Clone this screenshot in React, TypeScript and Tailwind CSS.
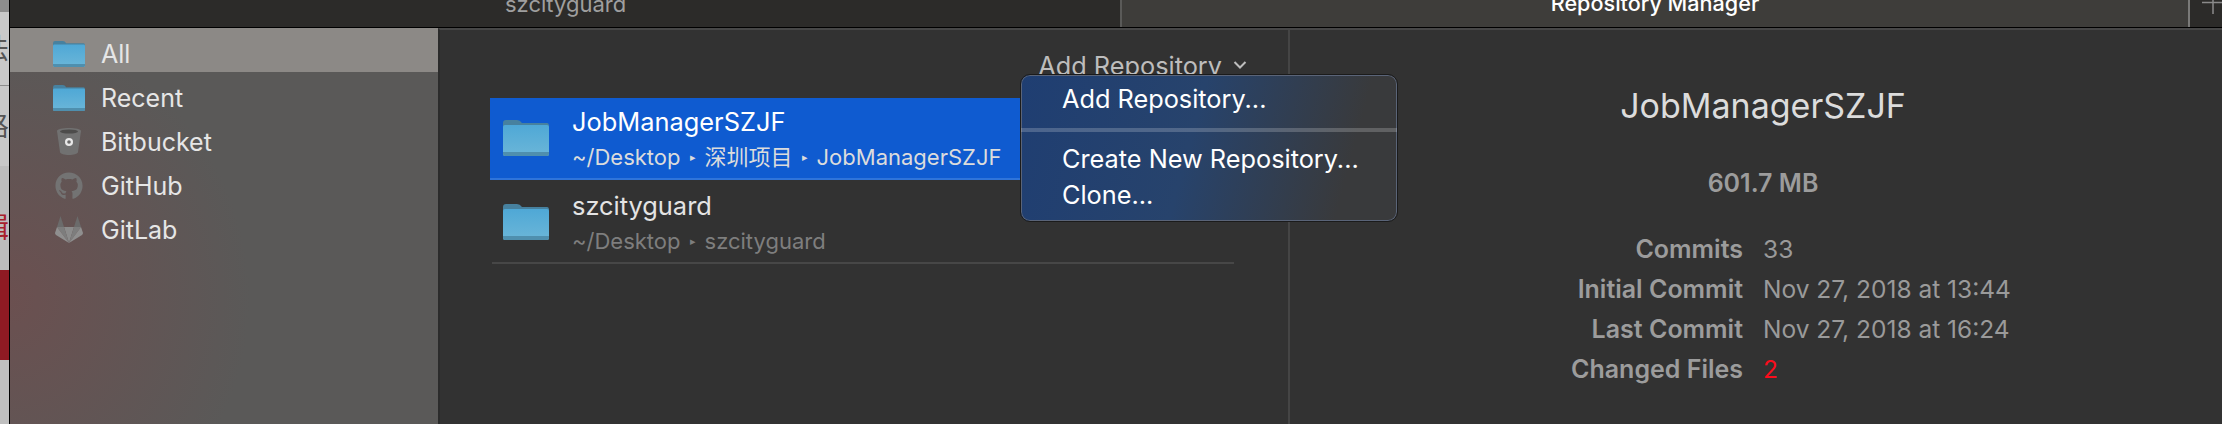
import { FaGithub } from "react-icons/fa";

const font = { fontFamily: "Inter, 'Noto Sans CJK SC', sans-serif" };

function Folder({ className }: { className: string }) {
  return (
    <svg className={className} viewBox="0 0 46 36" preserveAspectRatio="none">
      <defs>
        <linearGradient id="folderBody" x1="0" y1="0" x2="0" y2="1">
          <stop offset="0" stopColor="#4fa8d6" />
          <stop offset="1" stopColor="#6bb6d8" />
        </linearGradient>
      </defs>
      <path d="M0 3 Q0 0 3 0 H14 Q17 0 19 3 H44 Q46 3 46 6 V10 H0 Z" fill="#47819f" />
      <rect x="0" y="5" width="46" height="31" rx="2" fill="url(#folderBody)" />
      <path d="M0 32 H46 V34 Q46 36 44 36 H2 Q0 36 0 34 Z" fill="#4f8fae" />
    </svg>
  );
}

function Bitbucket() {
  return (
    <svg className="w-[24px] h-[28px]" viewBox="0 0 24 28">
      <path d="M0 3 C0 -1 24 -1 24 3 L21 24 C20.500 28 3.500 28 3 24 Z" fill="#717171" />
      <ellipse cx="12" cy="3.500" rx="9" ry="2" fill="#4d4c4b" />
      <circle cx="12" cy="14" r="4" fill="#e8e8e8" />
      <circle cx="12" cy="14" r="1.800" fill="#6a6a6a" />
    </svg>
  );
}

function GitLab() {
  return (
    <svg className="w-[28px] h-[28px]" viewBox="0 0 28 28">
      <path d="M14 27 L9 11 H19 Z" fill="#8c8c8c" />
      <path d="M14 27 L9 11 H2 Z" fill="#7d7d7d" />
      <path d="M14 27 L19 11 H26 Z" fill="#7d7d7d" />
      <path d="M2 11 L0 17 Q0 18 1 19 L14 27 Z" fill="#8f8f8f" />
      <path d="M26 11 L28 17 Q28 18 27 19 L14 27 Z" fill="#8f8f8f" />
      <path d="M2 11 L5.500 0 L9 11 Z" fill="#6b6b6b" />
      <path d="M26 11 L22.500 0 L19 11 Z" fill="#6b6b6b" />
    </svg>
  );
}

function SideItem({ label, icon, active }: { label: string; icon: React.ReactNode; active?: boolean }) {
  return (
    <div className={`h-[44px] pt-[7px] flex items-center ${active ? "bg-[#8c8986]" : ""}`}>
      <div className="w-[82px] flex justify-end">
        <div className="w-[46px] flex justify-center">{icon}</div>
      </div>
      <span className="ml-[9px] mt-[2px] text-[25px] text-[#e6e6e6] leading-none">{label}</span>
    </div>
  );
}

function DesktopBit({ className, text, color }: { className: string; text?: string; color?: string }) {
  return (
    <div className={`flex items-center justify-end overflow-hidden ${className}`}>
      {text ? <span className={`text-[28px] leading-none whitespace-nowrap ${color}`}>{text}</span> : null}
    </div>
  );
}

function Row({ name, path, selected }: { name: string; path: React.ReactNode; selected?: boolean }) {
  return (
    <div className={`flex items-center ${selected ? "h-[82px] bg-[#0f5bd0] border-b-2 border-[#2f74da]" : "h-[84px] pt-[2px] border-b-2 border-[#474747] ml-[2px]"}`}>
      <Folder className={`w-[46px] h-[36px] shrink-0 ${selected ? "ml-[13px]" : "ml-[11px]"}`} />
      <div className="ml-[23px] flex flex-col pt-[2px]">
        <span className={`text-[25.400px] leading-[36px] ${selected ? "text-white" : "text-[#e4e4e4]"}`}>{name}</span>
        <span className={`text-[22px] leading-[34px] flex items-center ${selected ? "text-[#dcdcdc]" : "text-[#7e7e7e]"}`}>{path}</span>
      </div>
    </div>
  );
}

const Arrow = () => <span className="text-[11px] mx-[9px] leading-none">▸</span>;

function Stat({ label, value, red }: { label: string; value: string; red?: boolean }) {
  return (
    <>
      <div className="text-right font-semibold text-[#9c9c9c] text-[25px] leading-[40px]">{label}</div>
      <div className={`text-[24.500px] leading-[40px] ${red ? "text-[#fb0d1c]" : "text-[#9a9a9a]"}`}>{value}</div>
    </>
  );
}

export default function App() {
  return (
    <div style={font} className="w-[2222px] h-[424px] flex overflow-hidden bg-[#323232]">
      <div className="w-[9px] h-full flex flex-col shrink-0 bg-[#c6c6c6]">
        <DesktopBit className="h-[12px] bg-[#8d8d8d]" />
        <DesktopBit className="h-[73px] bg-[#c9c9c9]" text="法" color="text-[#555555]" />
        <DesktopBit className="h-[81px] bg-[#c8c8c8] border-t border-[#8c8c8c]" text="路" color="text-[#555555]" />
        <DesktopBit className="h-[104px] pt-[20px] bg-[#bdbdbd]" text="辑" color="text-[#a8202c]" />
        <div className="h-[90px] bg-[#8f1a23]" />
        <div className="flex-1 bg-[#bfbfbf]" />
      </div>
      <div className="w-px h-full bg-black shrink-0" />
      <div className="flex-1 flex flex-col min-w-0">
        <div className="h-[27px] flex overflow-hidden shrink-0">
          <div className="w-[1110px] shrink-0 bg-[#2c2b29] text-[22px] leading-none text-[#9f9f9f] pl-[495px]">
            <div className="-mt-[7px]">szcityguard</div>
          </div>
          <div className="w-[2px] shrink-0 bg-[#5a5a58]" />
          <div className="w-[1066px] shrink-0 bg-[#3e3d3a] text-[21.600px] leading-none text-white flex justify-center font-medium">
            <div className="-mt-[7px]">Repository Manager</div>
          </div>
          <div className="w-[2px] shrink-0 bg-[#7a7a78]" />
          <div className="flex-1 bg-[#2c2b29]">
            <svg className="w-[20px] h-[14px] ml-[12px]" viewBox="0 0 20 14">
              <path d="M0 2.500 H20 M11 0 V14" stroke="#8a8a8a" strokeWidth="1.500" fill="none" />
            </svg>
          </div>
        </div>
        <div className="h-px bg-black shrink-0" />
        <div className="flex-1 flex min-h-0">
          <div className="w-[428px] shrink-0 bg-[radial-gradient(ellipse_240px_260px_at_0px_270px,#6b5050,#5a5958)]">
            <SideItem active label="All" icon={<Folder className="w-[32px] h-[26px]" />} />
            <SideItem label="Recent" icon={<Folder className="w-[32px] h-[26px]" />} />
            <SideItem label="Bitbucket" icon={<Bitbucket />} />
            <SideItem label="GitHub" icon={<FaGithub className="w-[28px] h-[28px] text-[#737373]" />} />
            <SideItem label="GitLab" icon={<GitLab />} />
          </div>
          <div className="flex-1 flex border-l-[2px] border-[#2b2b2b] border-t-[2px] border-t-[#474747] min-w-0 relative">
            <div className="w-[848px] shrink-0 pl-[50px] pr-[54px] relative">
              <div className="h-[68px] flex items-start justify-end -mr-[13px] pt-[21px] text-[#bdbdbd] text-[25.300px] leading-[30px]">
                <span>Add Repository</span>
                <svg className="w-[14px] h-[10px] ml-[11px] mt-[9px]" viewBox="0 0 14 10">
                  <path d="M1.500 2 L7 7.500 L12.500 2" stroke="#bdbdbd" strokeWidth="2" fill="none" />
                </svg>
              </div>
              <Row
                selected
                name="JobManagerSZJF"
                path={<>~/Desktop<Arrow />深圳项目<Arrow />JobManagerSZJF</>}
              />
              <Row name="szcityguard" path={<>~/Desktop<Arrow />szcityguard</>} />
              <div className="absolute left-[580px] top-[44px] w-[378px] h-[148px] rounded-[10px] border border-[#1b1b1b] ring-1 ring-inset ring-[#5a6478] bg-[linear-gradient(105deg,#1f3e72_0%,#27436c_45%,#393a3c_85%)] pt-[6px] text-white text-[25.300px] z-10">
                <div className="h-[36px] pl-[41px] flex items-center">Add Repository...</div>
                <div className="h-[4px] bg-[#ffffff33] mt-[11px] mb-[9px]" />
                <div className="h-[36px] pl-[41px] flex items-center">Create New Repository...</div>
                <div className="h-[36px] pl-[41px] flex items-center">Clone...</div>
              </div>
            </div>
            <div className="w-[2px] bg-[#454545] shrink-0" />
            <div className="flex-1 min-w-0 flex flex-col">
              <div className="pl-[14px] h-[152px] flex flex-col items-center">
                <div className="text-[34px] text-[#dcdcdc] leading-[40px] mt-[56px]">JobManagerSZJF</div>
                <div className="text-[25px] font-semibold text-[#9c9c9c] leading-[30px] mt-[42px]">601.7 MB</div>
              </div>
              <div className="grid grid-cols-[453px_1fr] gap-x-5 mt-[47px]">
                <Stat label="Commits" value="33" />
                <Stat label="Initial Commit" value="Nov 27, 2018 at 13:44" />
                <Stat label="Last Commit" value="Nov 27, 2018 at 16:24" />
                <Stat label="Changed Files" value="2" red />
              </div>
            </div>
          </div>
        </div>
      </div>
    </div>
  );
}
